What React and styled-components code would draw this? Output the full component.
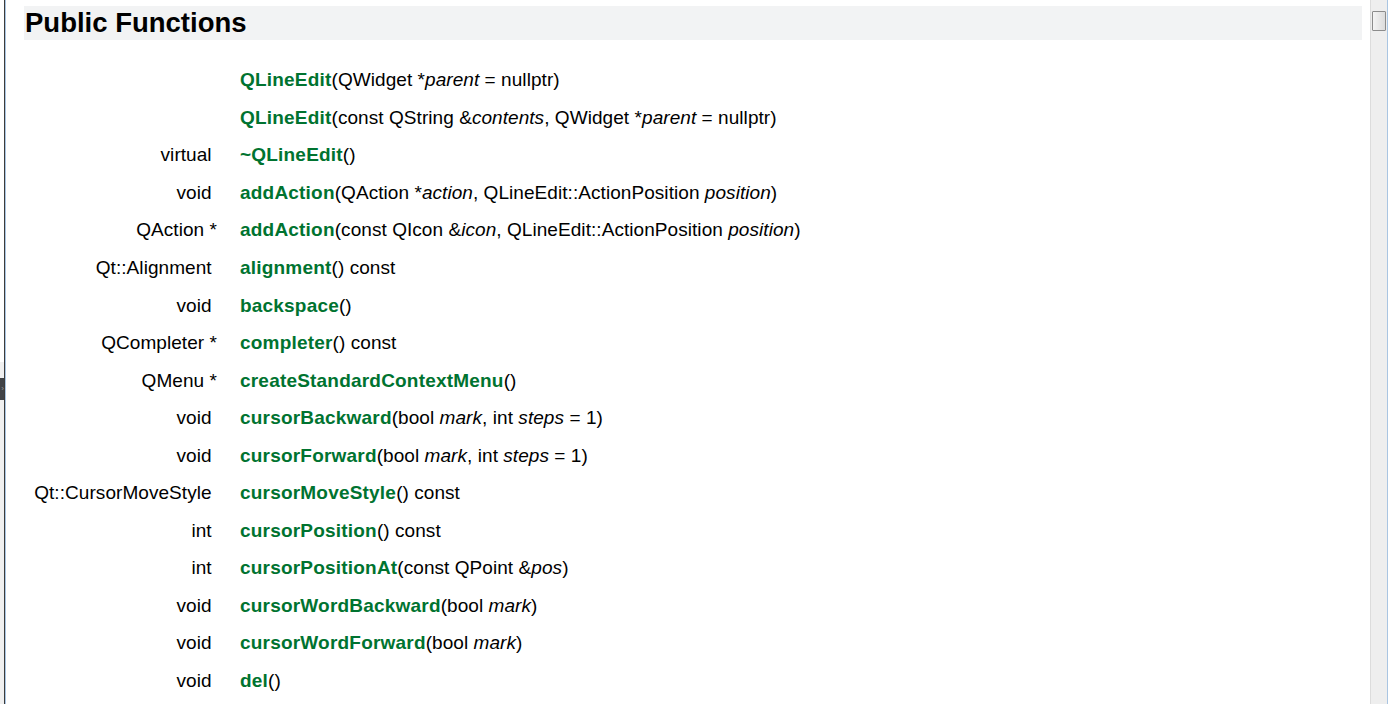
import React, { Fragment } from "react";
import styled, { createGlobalStyle } from "styled-components";

const rows = [
  { type: "", name: "QLineEdit", args: [["(QWidget *"], ["parent", 1], [" = nullptr)"]] },
  { type: "", name: "QLineEdit", args: [["(const QString &"], ["contents", 1], [", QWidget *"], ["parent", 1], [" = nullptr)"]] },
  { type: "virtual ", name: "~QLineEdit", args: [["()"]] },
  { type: "void ", name: "addAction", args: [["(QAction *"], ["action", 1], [", QLineEdit::ActionPosition "], ["position", 1], [")"]] },
  { type: "QAction *", name: "addAction", args: [["(const QIcon &"], ["icon", 1], [", QLineEdit::ActionPosition "], ["position", 1], [")"]] },
  { type: "Qt::Alignment ", name: "alignment", args: [["() const"]] },
  { type: "void ", name: "backspace", args: [["()"]] },
  { type: "QCompleter *", name: "completer", args: [["() const"]] },
  { type: "QMenu *", name: "createStandardContextMenu", args: [["()"]] },
  { type: "void ", name: "cursorBackward", args: [["(bool "], ["mark", 1], [", int "], ["steps", 1], [" = 1)"]] },
  { type: "void ", name: "cursorForward", args: [["(bool "], ["mark", 1], [", int "], ["steps", 1], [" = 1)"]] },
  { type: "Qt::CursorMoveStyle ", name: "cursorMoveStyle", args: [["() const"]] },
  { type: "int ", name: "cursorPosition", args: [["() const"]] },
  { type: "int ", name: "cursorPositionAt", args: [["(const QPoint &"], ["pos", 1], [")"]] },
  { type: "void ", name: "cursorWordBackward", args: [["(bool "], ["mark", 1], [")"]] },
  { type: "void ", name: "cursorWordForward", args: [["(bool "], ["mark", 1], [")"]] },
  { type: "void ", name: "del", args: [["()"]] },
];

const App = () => (
  <Fragment>
    <GlobalStyle />
    <Window>
      <SideEdge>
        <EdgePane />
        <EdgeTab>›</EdgeTab>
      </SideEdge>
      <Main>
        <Heading>Public Functions</Heading>
        <Members>
          {rows.map((row, index) => (
            <Row key={index}>
              <TypeCell>{row.type}</TypeCell>
              <SigCell>
                <FuncLink>{row.name}</FuncLink>
                {row.args.map(([text, italic], i) =>
                  italic ? <Arg key={i}>{text}</Arg> : <span key={i}>{text}</span>
                )}
              </SigCell>
            </Row>
          ))}
        </Members>
      </Main>
      <Scrollbar>
        <Thumb />
      </Scrollbar>
    </Window>
  </Fragment>
);

const GlobalStyle = createGlobalStyle`
  html, body {
    margin: 0;
    height: 100%;
    background: #ffffff;
    overflow: hidden;
  }
  body {
    font-family: "Liberation Sans", Arial, sans-serif;
    color: #000000;
  }
`;

const Window = styled.div`
  display: flex;
  height: 704px;
  overflow: hidden;
`;

const SideEdge = styled.div`
  width: 4px;
  display: flex;
  flex-direction: column;
  background: #f0f0f0;
  border-right: 1px solid #3c3c3c;
  box-shadow: 1px 0 0 #a9c5e2;
  margin-right: 1px;
`;

const EdgePane = styled.div`
  height: 362px;
  background: #ffffff;
`;

const EdgeTab = styled.div`
  margin-top: 16px;
  height: 22px;
  background: #404347;
  color: #9a9a9a;
  font-size: 8px;
  line-height: 22px;
  overflow: hidden;
  text-align: right;
`;

const Main = styled.main`
  flex: 1;
  padding: 6px 8px 0 18px;
  min-width: 0;
`;

const Heading = styled.h2`
  margin: 0;
  height: 34px;
  padding-left: 1px;
  background: #f2f3f4;
  font-size: 27.5px;
  font-weight: bold;
  line-height: 34px;
  color: #000000;
`;

const Members = styled.div`
  padding-top: 21.5px;
  font-size: 19px;
  letter-spacing: 0.06px;
`;

const Row = styled.div`
  display: grid;
  grid-template-columns: 193px 1fr;
  align-items: center;
  height: 37.56px;
`;

const TypeCell = styled.div`
  text-align: right;
  white-space: pre;
`;

const SigCell = styled.div`
  padding-left: 23px;
  white-space: pre;
`;

const FuncLink = styled.span`
  color: #007330;
  font-weight: bold;
  letter-spacing: 0.2px;
`;

const Arg = styled.i`
  font-style: italic;
`;

const Scrollbar = styled.div`
  width: 16px;
  background: #eeeeee;
  border-left: 1px solid #dcdcdc;
  border-right: 1px solid #a9c5e2;
  padding-top: 11px;
`;

const Thumb = styled.div`
  margin: 0 1px;
  height: 18px;
  border: 1px solid #8c8c8c;
  border-radius: 1px;
  background: linear-gradient(to right, #f4f4f4, #dcdcdc);
`;

export default App;
